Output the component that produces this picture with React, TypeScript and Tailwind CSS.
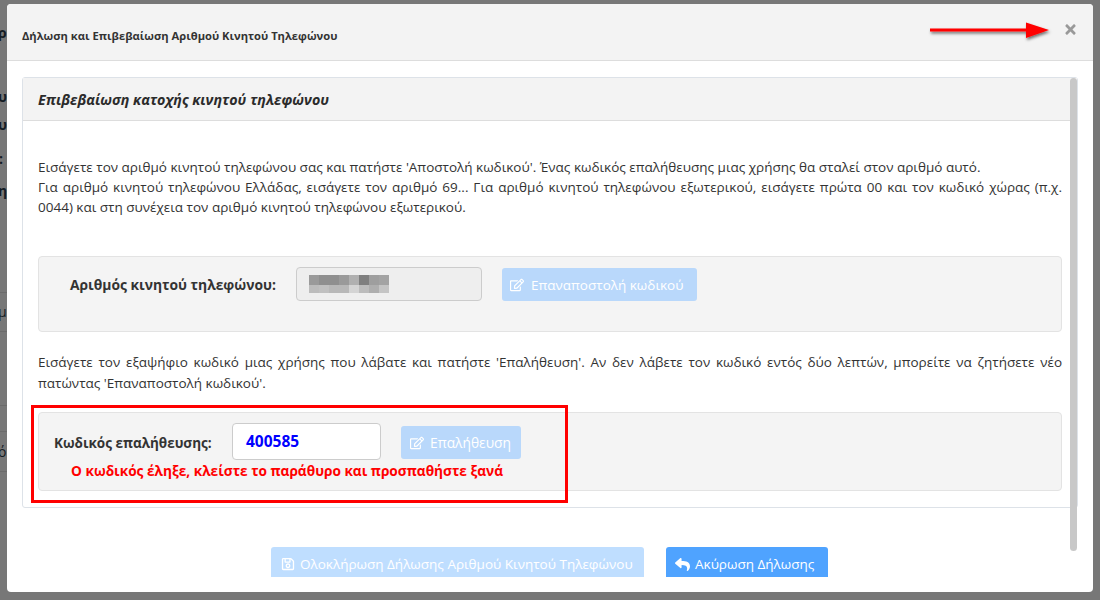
import { FaRegEdit, FaRegSave, FaReply, FaTimes } from "react-icons/fa";

const top = ["#9a9a9a", "#8f8f8f", "#8f8f8f", "#9a9a9a", "#b0b0b0", "#7f7f7f", "#9e9e9e", "#a3a3a3"];
const bottom = ["#bcbcbc", "#c0c0c0", "#b8b8b8", "#b8b8b8", "#d4d4d4", "#bcbcbc", "#aeaeae", "#c4c4c4"];

function Pixels() {
  return (
    <div className="flex flex-col">
      <div className="flex">
        {top.map((c, i) => (
          <div key={i} className="w-[10px] h-[10px]" style={{ backgroundColor: c }} />
        ))}
      </div>
      <div className="flex">
        {bottom.map((c, i) => (
          <div key={i} className="w-[10px] h-[8px]" style={{ backgroundColor: c }} />
        ))}
      </div>
    </div>
  );
}

export default function App() {
  return (
    <div className="relative w-[1100px] h-[600px] overflow-hidden bg-[#777777] font-['Open_Sans',sans-serif] text-[#333333]">
      <div className="flex flex-col w-[7px] overflow-hidden text-[14px] font-bold text-[#141c24] leading-none">
        <div className="h-[292px] flex flex-col">
          <span className="mt-[26px] ml-[-2px]">ρ</span>
          <span className="mt-[50px] ml-[-2px]">υ</span>
          <span className="mt-[14px] ml-[-2px]">υ</span>
          <span className="mt-[20px] ml-[-1px]">:</span>
          <span className="mt-[18px] ml-[-2px]">η</span>
        </div>
        <div className="h-[40px] border-t border-b border-[#6b6b6b] flex items-center">
          <span className="ml-[-2px] font-normal">μ</span>
        </div>
        <div className="h-[74px] border-b border-[#6b6b6b]" />
        <div className="h-[26px] border-b border-[#6b6b6b]" />
        <div className="h-[40px] border-b border-[#6b6b6b] flex items-center">
          <span className="ml-[-2px] font-normal">ό</span>
        </div>
      </div>

      <div className="absolute left-[7px] top-[4px] w-[1086px] h-[588px] bg-white rounded-[4px] overflow-hidden flex flex-col">
        <div className="h-[57px] shrink-0 bg-[#f3f3f3] border-b border-[#dddddd] flex items-center justify-between pl-[15px] pr-[15px]">
          <div className="text-[11.2px] font-bold text-[#333333] mt-[9px]">Δήλωση και Επιβεβαίωση Αριθμού Κινητού Τηλεφώνου</div>
          <FaTimes className="text-[#999999] text-[15px] mt-[-5px]" />
        </div>

        <div className="h-[516px] shrink-0 overflow-hidden pt-[16px] px-[15px]">
          <div className="w-[1056px] h-[431px] border border-[#dde2e8] rounded-[3px] flex flex-col">
            <div className="h-[43px] shrink-0 bg-[#f3f3f3] border-b border-[#dddddd] flex items-center pl-[15px] pt-[2px] text-[14.3px] font-bold italic text-[#2b2b2b]">
              Επιβεβαίωση κατοχής κινητού τηλεφώνου
            </div>
            <div className="px-[15px] pt-[36px]">
              <p className="text-[13.5px] leading-[20px] text-justify text-[#333333] w-[1024px]">
                Εισάγετε τον αριθμό κινητού τηλεφώνου σας και πατήστε 'Αποστολή κωδικού'. Ένας κωδικός επαλήθευσης μιας χρήσης θα σταλεί στον αριθμό αυτό.
                <br />
                Για αριθμό κινητού τηλεφώνου Ελλάδας, εισάγετε τον αριθμό 69... Για αριθμό κινητού τηλεφώνου εξωτερικού, εισάγετε πρώτα 00 και τον κωδικό χώρας (π.χ. 0044) και στη συνέχεια τον αριθμό κινητού τηλεφώνου εξωτερικού.
              </p>

              <div className="mt-[39px] h-[76px] w-[1024px] bg-[#f4f4f4] border border-[#e3e3e3] rounded-[4px] flex items-start pt-[10px] pl-[31px]">
                <div className="w-[226px] h-[34px] pt-[2px] flex items-center text-[13.85px] font-bold">Αριθμός κινητού τηλεφώνου:</div>
                <div className="w-[186px] h-[34px] bg-[#eeeeee] border border-[#cccccc] rounded-[4px] flex items-center pl-[12px] shrink-0">
                  <Pixels />
                </div>
                <div className="ml-[20px] mt-[1px] w-[195px] h-[33px] pl-[8px] pt-[1px] bg-[#b9d8fb] rounded-[3px] text-white text-[13.5px] flex items-center gap-[7px]">
                  <FaRegEdit className="text-[14px]" />
                  <span>Επαναποστολή κωδικού</span>
                </div>
              </div>

              <p className="mt-[20px] text-[13.5px] leading-[21px] text-justify w-[1024px]">
                Εισάγετε τον εξαψήφιο κωδικό μιας χρήσης που λάβατε και πατήστε 'Επαλήθευση'. Αν δεν λάβετε τον κωδικό εντός δύο λεπτών, μπορείτε να ζητήσετε νέο πατώντας 'Επαναποστολή κωδικού'.
              </p>

              <div className="mt-[18px] h-[79px] w-[1024px] bg-[#f4f4f4] border border-[#e3e3e3] rounded-[4px] pt-[10px] pl-[15px]">
                <div className="flex items-center">
                  <div className="w-[178px] pt-[3px] text-[13.5px] font-bold">Κωδικός επαλήθευσης:</div>
                  <div className="w-[149px] h-[37px] pt-[1px] bg-white border border-[#cccccc] rounded-[4px] flex items-center pl-[13px] text-[15.5px] font-bold text-[#0000ff]">400585</div>
                  <div className="ml-[20px] mt-[2px] w-[120px] h-[33px] pl-[9px] pt-[1px] bg-[#b9d8fb] rounded-[3px] text-white text-[13.8px] flex items-center gap-[6px]">
                    <FaRegEdit className="text-[14px]" />
                    <span>Επαλήθευση</span>
                  </div>
                </div>
                <div className="mt-[2px] ml-[17px] text-[13.66px] font-bold text-[#ff0000] leading-[18px]">Ο κωδικός έληξε, κλείστε το παράθυρο και προσπαθήστε ξανά</div>
              </div>
            </div>
          </div>

          <div className="mt-[39px] flex justify-center gap-[22px] pr-[1px]">
            <div className="w-[373px] h-[36px] pl-[10px] pb-[2px] bg-[#bfdeff] rounded-[3px] text-white text-[13.5px] flex items-center gap-[5px]">
              <FaRegSave className="text-[14px]" />
              <span>Ολοκλήρωση Δήλωσης Αριθμού Κινητού Τηλεφώνου</span>
            </div>
            <div className="w-[162px] h-[36px] pl-[9px] pb-[2px] bg-[#4fa3ff] rounded-[3px] text-white text-[13.5px] flex items-center gap-[5px]">
              <FaReply className="text-[15px]" />
              <span>Ακύρωση Δήλωσης</span>
            </div>
          </div>
        </div>

        <div className="absolute left-[1063px] top-[74px] w-[7px] h-[473px] bg-[#c8c8c8] rounded-[4px]" />
      </div>

      <div className="absolute left-[31px] top-[405px] w-[537px] h-[98px] border-[3px] border-[#ff0000]" />

      <svg className="absolute left-[925px] top-[18px]" width="130" height="30" viewBox="0 0 130 30">
        <defs>
          <filter id="sh" x="-20%" y="-50%" width="140%" height="220%">
            <feDropShadow dx="1" dy="2" stdDeviation="1.5" floodColor="#000000" floodOpacity="0.55" />
          </filter>
        </defs>
        <path d="M5 10.5 H101 V4.5 L124 12 L101 20 V13.5 H5 Z" fill="#ff0000" filter="url(#sh)" />
      </svg>
    </div>
  );
}
